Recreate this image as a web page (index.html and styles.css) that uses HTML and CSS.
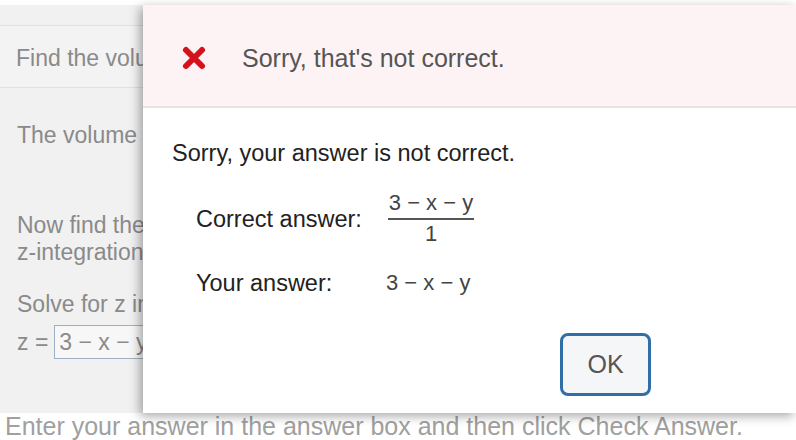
FILE: index.html
```html
<!DOCTYPE html>
<html lang="en">
<head>
    <meta charset="UTF-8">
    <meta name="viewport" content="width=device-width, initial-scale=1.0">
    <title>Check Answer</title>
    <link rel="stylesheet" href="styles.css">
</head>
<body>
    <div class="page">
        <div class="question-head"></div>
        <div class="question-row">Find the volume of the region bounded by the coordinate planes and the plane.</div>
        <div class="work">
            <p class="step-first">The volume of the region is given by the triple integral.</p>
            <p class="step-second">Now find the limits of integration for the<br>z-integration. The lower limit is z = 0.</p>
            <p class="step-third">Solve for z in the equation of the plane.</p>
            <div class="answer-line">z = <span class="answer-box">3 &minus; x &minus; y</span></div>
        </div>
    </div>
    <p class="instructions">Enter your answer in the answer box and then click Check Answer.</p>

    <div class="dialog">
        <div class="dialog-head">
            <svg class="x-icon" width="26" height="26" viewBox="0 0 26 26">
                <path d="M5 5 L21 21 M21 5 L5 21" stroke="#d4121e" stroke-width="6" stroke-linecap="round"/>
            </svg>
            <span class="dialog-title">Sorry, that's not correct.</span>
        </div>
        <div class="dialog-body">
            <p class="message">Sorry, your answer is not correct.</p>
            <div class="answers">
                <span class="label">Correct answer:</span>
                <span class="frac">
                    <span class="num">3 &minus; x &minus; y</span>
                    <span class="den">1</span>
                </span>
                <span class="label">Your answer:</span>
                <span class="value">3 &minus; x &minus; y</span>
            </div>
            <div class="dialog-foot">
                <button class="ok-btn">OK</button>
            </div>
        </div>
    </div>
</body>
</html>
```

FILE: styles.css
```css
body {
    margin: 0;
    font-family: "Liberation Sans", Arial, sans-serif;
    background-color: #ffffff;
    overflow: hidden;
    height: 440px;
}
.page {
    margin-top: 5px;
    height: 408px;
    background-color: #f1f1f1;
    overflow: hidden;
}
.question-head {
    height: 20px;
    border-bottom: 1px solid #e0e0e0;
}
.question-row {
    height: 61px;
    line-height: 64px;
    padding-left: 16px;
    border-bottom: 1px solid #e0e0e0;
    font-size: 23px;
    color: #8a8a8a;
    white-space: nowrap;
    background-color: #f3f3f3;
}
.work {
    padding-left: 17px;
    color: #8a8a8a;
    font-size: 23px;
    white-space: nowrap;
}
.work p {
    margin: 0;
    line-height: 27px;
}
.work .step-first {
    padding-top: 34px;
}
.work .step-second {
    margin-top: 63px;
}
.work .step-third {
    margin-top: 25px;
}
.answer-line {
    margin-top: 7px;
    height: 34px;
    display: flex;
    align-items: center;
}
.answer-box {
    margin-left: 6px;
    border: 1px solid #9fb0c4;
    background: #f7f7f7;
    height: 32px;
    line-height: 32px;
    padding: 0 6px 0 4px;
    font-size: 23px;
}
.instructions {
    margin: 0;
    padding-left: 5px;
    font-size: 25px;
    line-height: 26px;
    color: #a0a0a0;
    white-space: nowrap;
}

/* dialog */
.dialog {
    position: absolute;
    left: 143px;
    right: 0;
    top: 5px;
    height: 408px;
    background: #ffffff;
    box-shadow: -3px 3px 10px rgba(0, 0, 0, 0.35);
}
.dialog-head {
    height: 96px;
    padding-top: 5px;
    background-color: #fdf3f4;
    border-bottom: 2px solid #e8e2e3;
    display: flex;
    align-items: center;
    padding-left: 38px;
}
.x-icon {
    flex: none;
}
.dialog-title {
    margin-left: 35px;
    font-size: 25px;
    color: #555555;
}
.dialog-body {
    padding-left: 29px;
}
.message {
    margin: 0;
    padding-top: 33px;
    font-size: 23.5px;
    line-height: 24px;
    color: #222222;
}
.answers {
    margin-top: 26px;
    margin-left: 24px;
    display: grid;
    grid-template-columns: 190px auto;
    align-items: center;
    row-gap: 25px;
    font-size: 23.5px;
    line-height: 24px;
    color: #222222;
}
.frac {
    display: inline-flex;
    flex-direction: column;
    align-items: center;
    width: 86px;
    margin-left: 2px;
    font-size: 22px;
    color: #444444;
}
.num {
    width: 100%;
    text-align: center;
    border-bottom: 2px solid #555555;
    line-height: 24px;
    padding-bottom: 3px;
}
.den {
    line-height: 24px;
    padding-top: 2px;
}
.value {
    font-size: 22px;
    color: #444444;
}
.dialog-foot {
    margin-top: 38px;
    padding-left: 388px;
}
.ok-btn {
    width: 91px;
    height: 63px;
    border: 3px solid #2f6ea6;
    border-radius: 8px;
    background: #f5f6f8;
    font-family: "Liberation Sans", Arial, sans-serif;
    font-size: 25px;
    color: #555555;
    cursor: pointer;
}
```
